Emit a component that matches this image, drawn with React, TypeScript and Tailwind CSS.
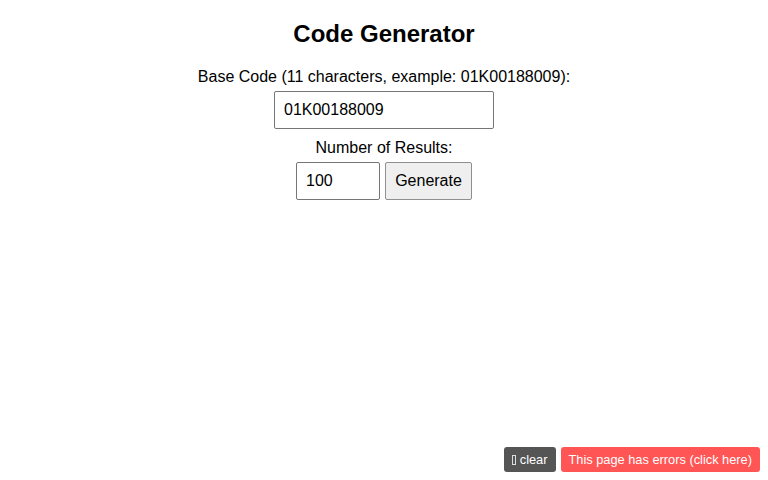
import React from "react";

export default function App() {
  return (
    <div
      className="relative w-[768px] h-[480px] bg-white text-black"
      style={{ fontFamily: '"Liberation Sans", Arial, sans-serif' }}
    >
      <div className="flex flex-col items-center pt-[20px]">
        <h1 className="text-[24px] leading-[28px] font-bold">Code Generator</h1>
        <label className="mt-[20px] text-[16px] leading-[18px]">
          Base Code (11 characters, example: 01K00188009):
        </label>
        <input
          className="mt-[5px] w-[220px] h-[38px] border border-[#767676] rounded-[2px] px-[9px] text-[16px] outline-none"
          defaultValue="01K00188009"
        />
        <label className="mt-[10px] text-[16px] leading-[18px]">Number of Results:</label>
        <div className="mt-[5px] flex gap-[5px]">
          <input
            className="w-[84px] h-[38px] border border-[#767676] rounded-[2px] px-[9px] text-[16px] outline-none"
            defaultValue="100"
          />
          <button className="w-[87px] h-[38px] border border-[#8f8f8f] rounded-[2px] bg-[#efefef] text-[16px]">
            Generate
          </button>
        </div>
      </div>
      <div className="absolute right-[8px] top-[447px] flex gap-[5px] text-[12.8px]">
        <button className="h-[25px] px-[8px] rounded-[3px] bg-[#555555] text-white flex items-center gap-[4px]">
          <span className="inline-block w-[4px] h-[10px] border border-white/80"></span>
          clear
        </button>
        <button className="h-[25px] px-[8px] rounded-[3px] bg-[#ff5555] text-white">
          This page has errors (click here)
        </button>
      </div>
    </div>
  );
}
